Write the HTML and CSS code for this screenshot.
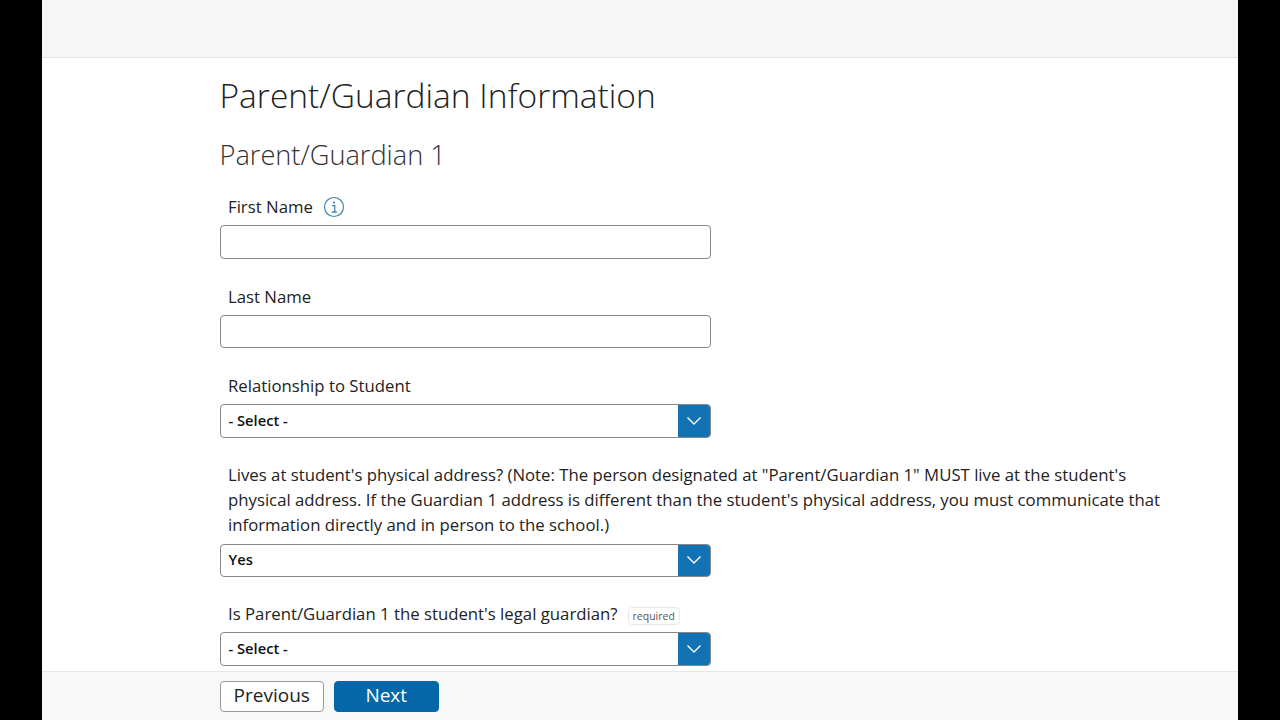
FILE: index.html
```html
<!DOCTYPE html>
<html lang="en">
<head>
    <meta charset="UTF-8">
    <meta name="viewport" content="width=device-width, initial-scale=1.0">
    <title>Parent/Guardian Information</title>
    <link rel="stylesheet" href="styles.css">
</head>
<body>
    <div class="page">
        <header class="top-bar"></header>
        <main class="content">
            <h1>Parent/Guardian Information</h1>
            <h2>Parent/Guardian 1</h2>

            <div class="field field-first">
                <label class="field-label">First Name
                    <svg class="info-icon" viewBox="0 0 22 22" width="22" height="22">
                        <circle cx="11" cy="11" r="9.5" fill="none" stroke="#3f86a6" stroke-width="1.2"/>
                        <circle cx="11" cy="6.6" r="1.1" fill="#3f86a6"/>
                        <path d="M8.8 9.7h2.9v6.2M8.8 16h5" fill="none" stroke="#3f86a6" stroke-width="1.3"/>
                    </svg>
                </label>
                <input class="text-input" type="text">
            </div>

            <div class="field">
                <label class="field-label">Last Name</label>
                <input class="text-input" type="text">
            </div>

            <div class="field">
                <label class="field-label">Relationship to Student</label>
                <div class="select">
                    <span class="select-value">- Select -</span>
                    <span class="select-btn">
                        <svg viewBox="0 0 16 10" width="16" height="10"><path d="M1.5 1.5L8 8l6.5-6.5" fill="none" stroke="#fff" stroke-width="1.4"/></svg>
                    </span>
                </div>
            </div>

            <div class="field">
                <label class="field-label long">Lives at student's physical address? (Note: The person designated at "Parent/Guardian 1" MUST live at the student's physical address. If the Guardian 1 address is different than the student's physical address, you must communicate that information directly and in person to the school.)</label>
                <div class="select">
                    <span class="select-value">Yes</span>
                    <span class="select-btn">
                        <svg viewBox="0 0 16 10" width="16" height="10"><path d="M1.5 1.5L8 8l6.5-6.5" fill="none" stroke="#fff" stroke-width="1.4"/></svg>
                    </span>
                </div>
            </div>

            <div class="field field-last">
                <label class="field-label">Is Parent/Guardian 1 the student's legal guardian?
                    <span class="required">required</span>
                </label>
                <div class="select">
                    <span class="select-value">- Select -</span>
                    <span class="select-btn">
                        <svg viewBox="0 0 16 10" width="16" height="10"><path d="M1.5 1.5L8 8l6.5-6.5" fill="none" stroke="#fff" stroke-width="1.4"/></svg>
                    </span>
                </div>
            </div>
        </main>
        <footer class="bottom-bar">
            <button class="button button-prev">Previous</button>
            <button class="button button-next">Next</button>
        </footer>
    </div>
</body>
</html>
```
FILE: styles.css
```css
html, body {
    height: 100%;
}
body {
    margin: 0;
    background: #000;
    font-family: 'Open Sans', sans-serif;
    color: #222;
    overflow: hidden;
}
.page {
    width: 1196px;
    height: 720px;
    margin: 0 auto;
    background: #fff;
    display: flex;
    flex-direction: column;
}
.top-bar {
    height: 57px;
    flex: none;
    background: #f6f6f6;
    border-bottom: 1px solid #e4e4e4;
}
.content {
    flex: 1;
    min-height: 0;
    overflow: hidden;
    padding: 0 70px 0 177.5px;
}
h1 {
    font-size: 33.5px;
    font-weight: 300;
    line-height: 44px;
    margin: 15px 0 0;
    color: #222;
}
h2 {
    font-size: 27.2px;
    font-weight: 300;
    line-height: 36px;
    margin: 20px 0 0;
    color: #333;
}
.field {
    margin-top: 25px;
}
.field-first {
    margin-top: 21px;
}
.field-last {
    margin-top: 24px;
}
.field-label {
    display: flex;
    align-items: center;
    flex-wrap: wrap;
    padding-left: 8.5px;
    font-size: 16.75px;
    line-height: 25px;
    margin-bottom: 6px;
}
.field-label.long {
    display: block;
    margin-top: -1px;
    margin-bottom: 7px;
}
.info-icon {
    margin-left: 10.5px;
}
.required {
    margin: 4px 0 0 10px;
    padding: 0 4px;
    font-size: 10.5px;
    line-height: 16px;
    color: #555;
    border: 1px solid #e8e8e8;
    border-radius: 4px;
}
.text-input {
    display: block;
    box-sizing: border-box;
    width: 491.5px;
    height: 33.5px;
    margin: 0;
    background: #fff;
    border: 1px solid #888;
    border-radius: 4px;
}
.select {
    box-sizing: border-box;
    width: 491.5px;
    height: 33.5px;
    display: flex;
    align-items: center;
    justify-content: space-between;
    background: #fff;
    border: 1px solid #888;
    border-radius: 4px;
    overflow: hidden;
}
.select-value {
    padding: 0 0 2px 8px;
    font-size: 14.7px;
    font-weight: 600;
    color: #111;
}
.select-btn {
    width: 32px;
    height: 100%;
    display: flex;
    align-items: center;
    justify-content: center;
    background: #1272b3;
}
.bottom-bar {
    height: 48px;
    flex: none;
    display: flex;
    align-items: center;
    gap: 10px;
    padding-left: 177.5px;
    background: #f8f8f8;
    border-top: 1px solid #e6e6e6;
}
.button {
    box-sizing: border-box;
    width: 104.5px;
    height: 31px;
    padding: 0 0 2px;
    font-family: 'Open Sans', sans-serif;
    font-size: 19px;
    border-radius: 4px;
}
.button-prev {
    background: #fff;
    color: #222;
    border: 1px solid #999;
}
.button-next {
    background: #0467a8;
    color: #fff;
    border: 1px solid #0467a8;
}
```
